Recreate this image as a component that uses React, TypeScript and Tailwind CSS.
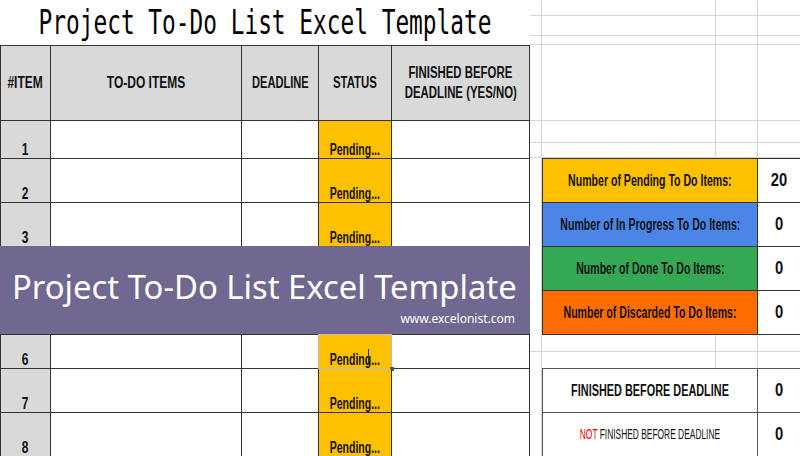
import React from "react";

const rows = [38, 44, 44, 44, 44, 34, 44, 44];

const stats = [
    { label: "Number of Pending To Do Items:", value: "20", bg: "bg-[#ffc000]" },
    { label: "Number of In Progress To Do Items:", value: "0", bg: "bg-[#4a86e8]" },
    { label: "Number of Done To Do Items:", value: "0", bg: "bg-[#34a853]" },
    { label: "Number of Discarded To Do Items:", value: "0", bg: "bg-[#ff6d01]" },
];

function Narrow({ children, className = "" }: { children: React.ReactNode; className?: string }) {
    return <span className={`inline-block whitespace-nowrap ${className}`}>{children}</span>;
}

function GridRow({ h }: { h: string }) {
    return (
        <div className={`flex ${h} border-b border-[#d4d4d4]`}>
            <div className="w-[12px] border-r border-[#d4d4d4]" />
            <div className="w-[174px] border-r border-[#d4d4d4]" />
            <div className="w-[42px] border-r border-[#d4d4d4]" />
            <div className="flex-1" />
        </div>
    );
}

export default function App() {
    return (
        <div className="relative w-[800px] h-[456px] overflow-hidden bg-white font-['Liberation_Sans',Arial,sans-serif] text-[#111]">
            <div className="flex">
                {/* Main table */}
                <div className="w-[530px] shrink-0">
                    <div className="h-[45px] flex items-center justify-center overflow-hidden">
                        <span className="inline-block scale-y-[1.5] font-['DejaVu_Sans_Mono',monospace] text-[22.8px] leading-none text-black">
                            Project To-Do List Excel Template
                        </span>
                    </div>
                    <div className="grid grid-cols-[50px_191px_77px_73px_138px] border-l border-t border-[#333] font-bold text-[15px]">
                        {/* Header */}
                        <div className="h-[75px] flex items-center justify-center bg-[#d9d9d9] border-r border-b border-[#333]">
                            <Narrow className="scale-x-[0.8] scale-y-[1.05]">#ITEM</Narrow>
                        </div>
                        <div className="h-[75px] flex items-center justify-center bg-[#d9d9d9] border-r border-b border-[#333]">
                            <Narrow className="scale-x-[0.8] scale-y-[1.05]">TO-DO ITEMS</Narrow>
                        </div>
                        <div className="h-[75px] flex items-center justify-center bg-[#d9d9d9] border-r border-b border-[#333]">
                            <Narrow className="scale-x-[0.74] scale-y-[1.05]">DEADLINE</Narrow>
                        </div>
                        <div className="h-[75px] flex items-center justify-center bg-[#d9d9d9] border-r border-b border-[#333]">
                            <Narrow className="scale-x-[0.76] scale-y-[1.05]">STATUS</Narrow>
                        </div>
                        <div className="h-[75px] flex flex-col items-center justify-center bg-[#d9d9d9] border-r border-b border-[#333] leading-[20px]">
                            <Narrow className="scale-x-[0.76] scale-y-[1.05]">FINISHED BEFORE</Narrow>
                            <Narrow className="scale-x-[0.76] scale-y-[1.05]">DEADLINE (YES/NO)</Narrow>
                        </div>

                        {rows.map((h, i) => {
                            const hidden = i === 3 || i === 4;
                            return (
                                <React.Fragment key={i}>
                                    <div
                                        className="flex items-end justify-center bg-[#d9d9d9] border-r border-b border-[#333] leading-[16px]"
                                        style={{ height: h }}
                                    >
                                        {!hidden && <Narrow className="scale-x-[0.8] scale-y-[1.05]">{i + 1}</Narrow>}
                                    </div>
                                    <div className="bg-white border-r border-b border-[#333]" style={{ height: h }} />
                                    <div className="bg-white border-r border-b border-[#333]" style={{ height: h }} />
                                    <div
                                        className="relative flex items-end justify-center bg-[#ffc000] border-r border-b border-[#333] leading-[16px]"
                                        style={{ height: h }}
                                    >
                                        {!hidden && <Narrow className="scale-x-[0.7] scale-y-[1.05]">Pending...</Narrow>}
                                        {i === 5 && (
                                            <>
                                                <div className="absolute inset-[-1px] border border-[#bdbdbd]" />
                                                <div className="absolute left-[49px] bottom-[4px] w-px h-[15px] bg-[#333]" />
                                                <div className="absolute right-[-3px] bottom-[-3px] w-[4px] h-[4px] bg-[#555]" />
                                            </>
                                        )}
                                    </div>
                                    <div className="bg-white border-r border-b border-[#333]" style={{ height: h }} />
                                </React.Fragment>
                            );
                        })}
                    </div>
                </div>

                {/* Summary side */}
                <div className="flex-1 flex flex-col">
                    <GridRow h="h-[16px]" />
                    <GridRow h="h-[20px]" />
                    <GridRow h="h-[9px]" />
                    <GridRow h="h-[76px]" />
                    <GridRow h="h-[22px]" />
                    <GridRow h="h-[15px]" />

                    {stats.map((s, i) => (
                        <div key={s.label} className="flex">
                            <div className="w-[12px] border-r border-[#d4d4d4]" />
                            <div
                                className={`flex flex-1 border-l border-b border-[#333] ${i === 0 ? "border-t h-[45px]" : "h-[44px]"}`}
                            >
                                <div className={`w-[215px] flex items-center justify-center border-r border-[#333] ${s.bg}`}>
                                    <Narrow className="text-[16px] font-bold scale-x-[0.66]">{s.label}</Narrow>
                                </div>
                                <div className="flex-1 flex items-center justify-center bg-white">
                                    <Narrow className="text-[18px] font-bold scale-x-[0.82] scale-y-[1.05]">{s.value}</Narrow>
                                </div>
                            </div>
                        </div>
                    ))}

                    <GridRow h="h-[17px]" />
                    <div className="flex h-[16px]">
                        <div className="w-[12px] border-r border-[#d4d4d4]" />
                        <div className="w-[174px] border-r border-[#d4d4d4]" />
                        <div className="w-[42px] border-r border-[#d4d4d4]" />
                        <div className="flex-1" />
                    </div>

                    <div className="flex">
                        <div className="w-[12px] border-r border-[#d4d4d4]" />
                        <div className="flex flex-1 h-[45px] border-l border-t border-b border-[#555]">
                            <div className="w-[215px] flex items-center justify-center border-r border-[#555]">
                                <Narrow className="text-[16px] font-bold scale-x-[0.68]">FINISHED BEFORE DEADLINE</Narrow>
                            </div>
                            <div className="flex-1 flex items-center justify-center">
                                <Narrow className="text-[18px] font-bold scale-x-[0.82] scale-y-[1.05]">0</Narrow>
                            </div>
                        </div>
                    </div>
                    <div className="flex">
                        <div className="w-[12px] border-r border-[#d4d4d4]" />
                        <div className="flex flex-1 h-[44px] border-l border-b border-[#555]">
                            <div className="w-[215px] flex items-center justify-center border-r border-[#555]">
                                <Narrow className="text-[14px] scale-x-[0.6]">
                                    <span className="text-[#e00000]">NOT</span> FINISHED BEFORE DEADLINE
                                </Narrow>
                            </div>
                            <div className="flex-1 flex items-center justify-center">
                                <Narrow className="text-[18px] font-bold scale-x-[0.82] scale-y-[1.05]">0</Narrow>
                            </div>
                        </div>
                    </div>
                </div>
            </div>

            {/* Watermark banner */}
            <div className="absolute left-0 top-[246px] w-[530px] h-[88px] bg-[#716891] text-white font-['Noto_Sans',sans-serif] pl-[12px] pr-[15px] pt-[21px]">
                <div className="text-[32.8px] leading-[40px] whitespace-nowrap">Project To-Do List Excel Template</div>
                <div className="text-[12px] leading-[16px] text-right mt-[4px]">www.excelonist.com</div>
            </div>
        </div>
    );
}
